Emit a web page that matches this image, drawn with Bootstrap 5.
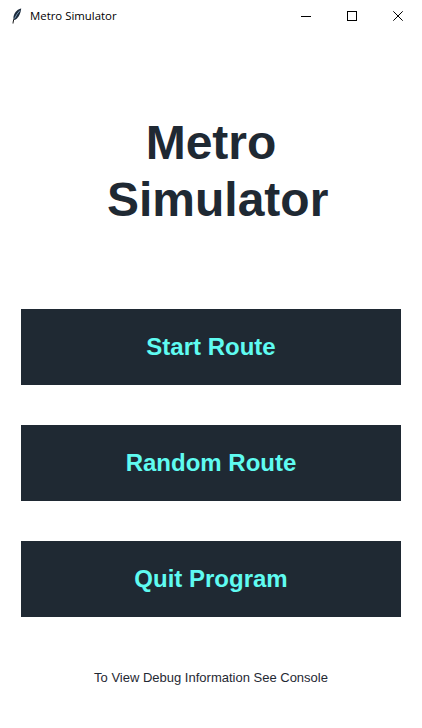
<!DOCTYPE html>
<html lang="en">
<head>
<meta charset="utf-8">
<title>Metro Simulator</title>
<link href="https://cdn.jsdelivr.net/npm/bootstrap@5.3.0/dist/css/bootstrap.min.css" rel="stylesheet">
<style>
html, body { height: 100%; background: #fff; overflow: hidden; }
.app-window { width: 422px; height: 728px; }
.title-strip { height: 31px; font-family: "Open Sans", "Noto Sans", sans-serif; font-size: 11.4px; color: #000; }
.feather-icon { margin-left: 12px; margin-right: 8px; }
.win-btn { width: 46px; height: 31px; }
.win-group { margin-right: 1px; }
.app-heading { margin: 83px 0 0; height: 195px; font-family: "Liberation Sans", Arial, sans-serif; font-weight: 700; font-size: 48px; line-height: 57px; color: #1f2933; white-space: pre; text-align: center; }
.menu-stack { padding: 0 21px; gap: 40px; }
.menu-btn { height: 76px; border: 0; border-radius: 0; background: #1f2933; color: #5ffbf1; font-family: "Liberation Sans", Arial, sans-serif; font-weight: 700; font-size: 24px; }
.menu-btn:hover { background: #1f2933; color: #5ffbf1; }
.debug-note { margin-top: 52px; font-family: "Liberation Sans", Arial, sans-serif; font-size: 13px; line-height: 18px; color: #1f2933; text-align: center; }
</style>
</head>
<body>
<div class="app-window d-flex flex-column">
  <div class="title-strip d-flex align-items-center">
    <svg class="feather-icon" width="10" height="16" viewBox="0 0 10 16" aria-hidden="true"><path d="M1 15.5 C1.2 13.5 1.5 12.3 2 11" stroke="#111" stroke-width="1" fill="none"/><path d="M9.2 .5 C6.5 .8 2.8 3.5 1.6 8 C1.2 10.2 1.5 11.6 2.5 12 C5.5 11.2 8.6 6.5 9.2 .5 Z" fill="#1c2a3a"/><path d="M8 2.5 C5.8 4.8 4 7.5 2.6 10.5" stroke="#8fb4d8" stroke-width=".8" fill="none"/></svg>
    <span class="flex-grow-1">Metro Simulator</span>
    <div class="win-group d-flex">
      <div class="win-btn d-flex align-items-center justify-content-center"><svg width="10" height="10" viewBox="0 0 10 10" aria-hidden="true"><path d="M0 5.5H10" stroke="#000" fill="none"/></svg></div>
      <div class="win-btn d-flex align-items-center justify-content-center"><svg width="10" height="10" viewBox="0 0 10 10" aria-hidden="true"><rect x=".5" y=".5" width="9" height="9" stroke="#000" fill="none"/></svg></div>
      <div class="win-btn d-flex align-items-center justify-content-center"><svg width="10" height="10" viewBox="0 0 10 10" aria-hidden="true"><path d="M.3 .3L9.7 9.7M9.7 .3L.3 9.7" stroke="#000" stroke-width="1" fill="none"/></svg></div>
    </div>
  </div>
  <h1 class="app-heading">Metro
 Simulator</h1>
  <div class="menu-stack d-flex flex-column">
    <button type="button" class="btn menu-btn">Start Route</button>
    <button type="button" class="btn menu-btn">Random Route</button>
    <button type="button" class="btn menu-btn">Quit Program</button>
  </div>
  <p class="debug-note mb-0">To View Debug Information See Console</p>
</div>
<script src="https://cdn.jsdelivr.net/npm/bootstrap@5.3.0/dist/js/bootstrap.bundle.min.js"></script>
</body>
</html>
